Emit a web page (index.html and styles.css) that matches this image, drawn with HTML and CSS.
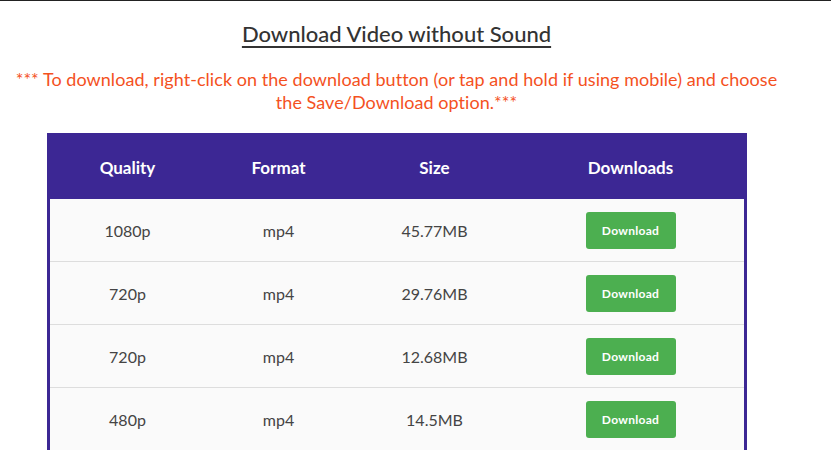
FILE: index.html
```html
<!DOCTYPE html>
<html lang="en">
<head>
    <meta charset="UTF-8">
    <meta name="viewport" content="width=device-width, initial-scale=1.0">
    <title>Download Video without Sound</title>
    <link rel="stylesheet" href="styles.css">
</head>
<body>
    <div class="container">
        <h2 class="title">Download Video without Sound</h2>
        <p class="note">*** To download, right-click on the download button (or tap and hold if using mobile) and choose the Save/Download option.***</p>
        <table class="download-table">
            <thead>
                <tr>
                    <th class="col-quality">Quality</th>
                    <th class="col-format">Format</th>
                    <th class="col-size">Size</th>
                    <th class="col-download">Downloads</th>
                </tr>
            </thead>
            <tbody>
                <tr>
                    <td>1080p</td>
                    <td>mp4</td>
                    <td>45.77MB</td>
                    <td><a class="download-btn" href="#">Download</a></td>
                </tr>
                <tr>
                    <td>720p</td>
                    <td>mp4</td>
                    <td>29.76MB</td>
                    <td><a class="download-btn" href="#">Download</a></td>
                </tr>
                <tr>
                    <td>720p</td>
                    <td>mp4</td>
                    <td>12.68MB</td>
                    <td><a class="download-btn" href="#">Download</a></td>
                </tr>
                <tr>
                    <td>480p</td>
                    <td>mp4</td>
                    <td>14.5MB</td>
                    <td><a class="download-btn" href="#">Download</a></td>
                </tr>
            </tbody>
        </table>
    </div>
</body>
</html>
```

FILE: styles.css
```css
body {
    margin: 0;
    border-top: 1px solid #222;
    font-family: 'Lato', sans-serif;
    background: #fff;
    color: #444;
}
.container {
    width: 793px;
    padding-top: 19px;
}
.title {
    margin: 0;
    text-align: center;
    font-size: 22px;
    font-weight: 500;
    color: #333;
    text-decoration: underline;
    text-decoration-thickness: 2px;
    text-underline-offset: 4px;
}
.note {
    margin: 21px 0 0;
    padding: 0 10px;
    text-align: center;
    font-size: 18px;
    letter-spacing: 0.05px;
    line-height: 23px;
    color: #f4511e;
}
.download-table {
    width: 700px;
    margin: 19px auto 0;
    border-collapse: collapse;
    border: 3px solid #3c2794;
    text-align: center;
}
.download-table th {
    height: 63px;
    padding: 0;
    background: #3c2794;
    color: #fff;
    font-size: 17px;
    font-weight: bold;
}
.col-quality { width: 156px; }
.col-format { width: 146px; }
.col-size { width: 166px; }
.col-download { width: 226px; }
.download-table td {
    height: 62px;
    padding: 0;
    background: #fafafa;
    border-bottom: 1px solid #ddd;
    font-size: 16px;
    color: #444;
}
.download-btn {
    display: inline-block;
    width: 90px;
    height: 37px;
    line-height: 37px;
    margin-top: 1px;
    border-radius: 3px;
    background: #4caf50;
    color: #fff;
    font-size: 12px;
    letter-spacing: 0.3px;
    font-weight: bold;
    text-decoration: none;
}
```
